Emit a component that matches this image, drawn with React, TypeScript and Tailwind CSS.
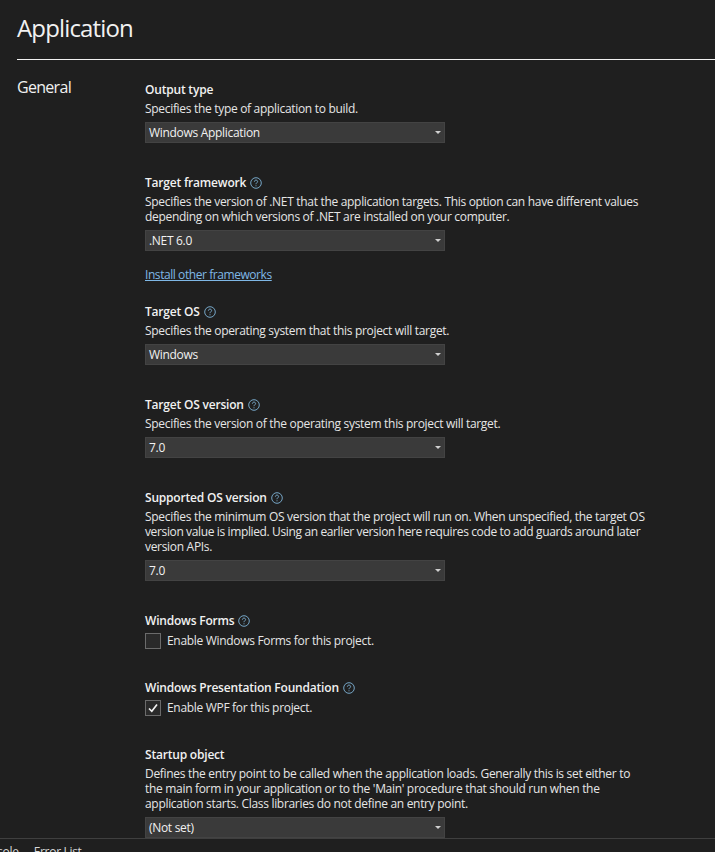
import { ReactNode } from 'react';

function Help() {
  return (
    <svg className="ml-[4px] shrink-0" width="12" height="12" viewBox="0 0 12 12" fill="none" stroke="#7fb4d8" strokeWidth="0.9">
      <circle cx="6" cy="6" r="5.3" />
      <path d="M4.4 4.7c0-1 .7-1.6 1.6-1.6s1.6.6 1.6 1.4c0 1.2-1.6 1.3-1.6 2.7" />
      <path d="M6 8.3v1" />
    </svg>
  );
}

function Label({ text, help }: { text: string; help?: boolean }) {
  return (
    <div className="flex h-4 items-center pt-[2px] text-[12px] font-semibold leading-4 tracking-[-0.2px] text-[#f1f1f1]">
      {text}
      {help && <Help />}
    </div>
  );
}

function Desc({ children }: { children: ReactNode }) {
  return <p className="mt-1 whitespace-nowrap text-[12px] leading-[15px] text-[#e6e6e6]">{children}</p>;
}

function Select({ value }: { value: string }) {
  return (
    <div className="mt-[6px] flex h-[21px] w-[300px] shrink-0 items-center justify-between border border-[#434343] bg-[#3a3a3a] pl-[3px] pr-[3px] text-[12px] text-[#f1f1f1]">
      <span>{value}</span>
      <span className="h-0 w-0 border-x-[3px] border-t-[3px] border-x-transparent border-t-[#d0d0d0]" />
    </div>
  );
}

function Check({ text, checked }: { text: string; checked?: boolean }) {
  return (
    <div className="mt-[5px] flex h-[15px] items-center text-[12px] text-[#e6e6e6]">
      <span className="flex h-4 w-4 items-center justify-center border border-[#6b6b6b] bg-[#2a2a2a]">
        {checked && (
          <svg width="12" height="12" viewBox="0 0 12 12" fill="none" stroke="#f1f1f1" strokeWidth="1.7">
            <path d="M2 6.5 4.8 9.3 10 2.6" />
          </svg>
        )}
      </span>
      <span className="ml-[6px]">{text}</span>
    </div>
  );
}

export default function App() {
  return (
    <div className="flex h-[852px] w-[715px] flex-col overflow-hidden bg-[#1f1f1f] font-['Open_Sans','Noto_Sans',sans-serif] tracking-[-0.31px] text-[#f1f1f1]">
      <header className="ml-[17px] h-[60px] shrink-0 border-b border-[#f1f1f1] pt-[11px] text-[24px] leading-[34px] tracking-[-0.85px]">
        Application
      </header>
      <main className="flex min-h-0 flex-1 overflow-hidden">
        <h2 className="ml-[17px] mt-[16px] w-[128px] shrink-0 text-[16px] leading-[22px] tracking-[-0.7px]">General</h2>
        <div className="mt-[21px] flex flex-col gap-[31px]">
          <section>
            <Label text="Output type" />
            <Desc>Specifies the type of application to build.</Desc>
            <Select value="Windows Application" />
          </section>
          <section>
            <Label text="Target framework" help />
            <Desc>
              Specifies the version of .NET that the application targets. This option can have different values
              <br />
              depending on which versions of .NET are installed on your computer.
            </Desc>
            <Select value=".NET 6.0" />
            <a className="mt-[16px] block h-4 text-[12px] leading-4 tracking-[-0.43px] text-[#7fb8e6] underline">Install other frameworks</a>
          </section>
          <section className="-mt-[11px]">
            <Label text="Target OS" help />
            <Desc>Specifies the operating system that this project will target.</Desc>
            <Select value="Windows" />
          </section>
          <section>
            <Label text="Target OS version" help />
            <Desc>Specifies the version of the operating system this project will target.</Desc>
            <Select value="7.0" />
          </section>
          <section>
            <Label text="Supported OS version" help />
            <Desc>
              Specifies the minimum OS version that the project will run on. When unspecified, the target OS
              <br />
              <span className="tracking-[-0.37px]">version value is implied. Using an earlier version here requires code to add guards around later</span>
              <br />
              version APIs.
            </Desc>
            <Select value="7.0" />
          </section>
          <section>
            <Label text="Windows Forms" help />
            <Check text="Enable Windows Forms for this project." />
          </section>
          <section>
            <Label text="Windows Presentation Foundation" help />
            <Check text="Enable WPF for this project." checked />
          </section>
          <section>
            <Label text="Startup object" />
            <Desc>
              Defines the entry point to be called when the application loads. Generally this is set either to
              <br />
              the main form in your application or to the 'Main' procedure that should run when the
              <br />
              application starts. Class libraries do not define an entry point.
            </Desc>
            <Select value="(Not set)" />
          </section>
        </div>
      </main>
      <footer className="flex h-[14px] shrink-0 gap-[15px] overflow-hidden border-t border-[#3f3f3f] pt-[5px] text-[12px] leading-4 text-[#d8d8d8]">
        <span className="-ml-[24px]">Console</span>
        <span>Error List</span>
      </footer>
    </div>
  );
}
